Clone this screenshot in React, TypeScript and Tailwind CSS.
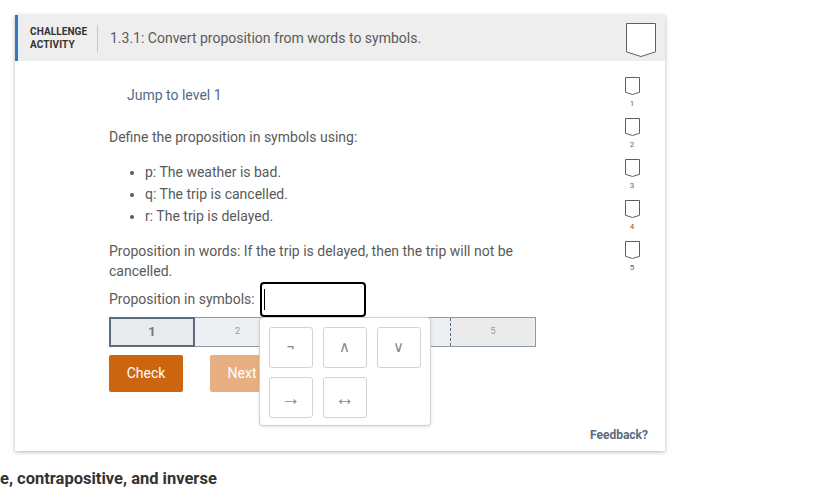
import React from "react";

function Shield({ w, h }: { w: number; h: number }) {
  return (
    <svg width={w} height={h} viewBox={`0 0 ${w} ${h}`}>
      <path
        d={`M0.5 0.5 H${w - 0.5} V${h - h * 0.15} L${w / 2} ${h - 0.5} L0.5 ${h - h * 0.15} Z`}
        fill="white"
        stroke="#5f5f5f"
        strokeWidth="1"
      />
    </svg>
  );
}

export default function App() {
  const syms1 = ["¬", "∧", "∨"];
  const syms2 = ["→", "↔"];
  return (
    <div
      className="relative w-[817px] h-[496px] bg-white overflow-hidden"
      style={{ fontFamily: "Roboto, 'Liberation Sans', sans-serif" }}
    >
      <div className="ml-[15px] mt-[15px] w-[650px] h-[436px] bg-white shadow-[0_1px_4px_rgba(0,0,0,0.3)] flex flex-col">
        {/* header */}
        <div className="h-[46px] bg-[#eeeeee] border-l-[3px] border-[#2b7cc2] flex items-center shrink-0">
          <div className="pl-[12px] w-[79px] text-[10px] font-bold leading-[13px] text-[#333] tracking-[0.1px]">
            CHALLENGE
            <br />
            ACTIVITY
          </div>
          <div className="w-px h-[27px] bg-[#c8c8c8]" />
          <div className="ml-[12px] text-[14px] text-[#5a5a5a]">
            1.3.1: Convert proposition from words to symbols.
          </div>
          <div className="ml-auto mr-[9px] mt-[3px]">
            <Shield w={30} h={34} />
          </div>
        </div>
        {/* body */}
        <div className="flex flex-col flex-1">
          <div className="flex">
            <div className="flex-1 pl-[94px] flex flex-col">
              <div className="mt-[24px] ml-[18px] text-[14px] leading-[20px] text-[#4f6b86]">
                Jump to level 1
              </div>
              <div className="mt-[22px] text-[14px] leading-[20px] text-[#5a5a5a]">
                Define the proposition in symbols using:
              </div>
              <ul className="mt-[14px] text-[14px] leading-[22px] text-[#5a5a5a] list-disc pl-[36px]">
                <li>p: The weather is bad.</li>
                <li>q: The trip is cancelled.</li>
                <li>r: The trip is delayed.</li>
              </ul>
              <div className="mt-[14px] w-[430px] text-[14px] leading-[20px] text-[#5a5a5a]">
                Proposition in words: If the trip is delayed, then the trip will not be cancelled.
              </div>
              <div className="mt-[1px] flex items-center h-[35px] text-[14px] text-[#5a5a5a]">
                <span>Proposition in symbols:</span>
                <div className="relative ml-[5px]">
                  <div className="w-[106px] h-[35px] border-2 border-black rounded-[4px] flex items-center pl-[2px]">
                    <div className="w-px h-[21px] bg-black" />
                  </div>
                  <div className="absolute left-[-1px] top-[35px] z-10 w-[172px] h-[109px] bg-white border border-[#d0d0d0] rounded-[4px] shadow-[0_1px_3px_rgba(0,0,0,0.12)] pt-[9px] pl-[9px] flex flex-col gap-[9px]">
                    <div className="flex gap-[10px]">
                      {syms1.map((s) => (
                        <div
                          key={s}
                          className="w-[44px] h-[41px] border border-[#d3d3d3] rounded-[3px] flex items-center justify-center text-[15px] text-[#888]"
                        >
                          {s}
                        </div>
                      ))}
                    </div>
                    <div className="flex gap-[10px]">
                      {syms2.map((s) => (
                        <div
                          key={s}
                          className="w-[44px] h-[41px] border border-[#d3d3d3] rounded-[3px] flex items-center justify-center text-[20px] text-[#888]"
                        >
                          {s}
                        </div>
                      ))}
                    </div>
                  </div>
                </div>
              </div>
              {/* progress */}
              <div className="w-[427px] h-[30px] flex border border-[#8a9bad] bg-[#edf0f3]">
                <div className="w-[86px] -my-px -ml-px border-2 border-[#5c6b7d] bg-[#e8eaed] flex items-center justify-center text-[13px] font-bold text-[#777]">
                  1
                </div>
                <div className="w-[85px] flex items-center justify-center text-[9px] text-[#999]">2</div>
                <div className="w-[85px] border-l border-dashed border-[#5c6b7d] flex items-center justify-center text-[9px] text-[#999]">3</div>
                <div className="w-[85px] border-l border-dashed border-[#5c6b7d] flex items-center justify-center text-[9px] text-[#999]">4</div>
                <div className="flex-1 border-l border-dashed border-[#5c6b7d] bg-[#ebebeb] flex items-center justify-center text-[9px] text-[#999]">5</div>
              </div>
              <div className="mt-[8px] flex gap-[27px]">
                <div className="w-[74px] h-[37px] bg-[#cc6510] rounded-[2px] flex items-center justify-center text-[14px] text-white">
                  Check
                </div>
                <div className="w-[64px] h-[37px] bg-[#e6b083] rounded-[2px] flex items-center justify-center text-[14px] text-white">
                  Next
                </div>
              </div>
            </div>
            <div className="w-[32px] mr-[17px] flex flex-col items-center pt-[16px] gap-[8px]">
              {[1, 2, 3, 4, 5].map((n) => (
                <div key={n} className="flex flex-col items-center">
                  <Shield w={15} h={18} />
                  <div className="mt-[3px] text-[8px] leading-[12px] text-[#666]">{n}</div>
                </div>
              ))}
            </div>
          </div>
          <div className="mt-auto mb-[7px] self-end mr-[17px] text-[12px] font-bold text-[#5c6b7d]">
            Feedback?
          </div>
        </div>
      </div>
      <div className="mt-[18px] text-[16.5px] font-bold text-[#333] leading-[20px]">
        e, contrapositive, and inverse
      </div>
    </div>
  );
}
